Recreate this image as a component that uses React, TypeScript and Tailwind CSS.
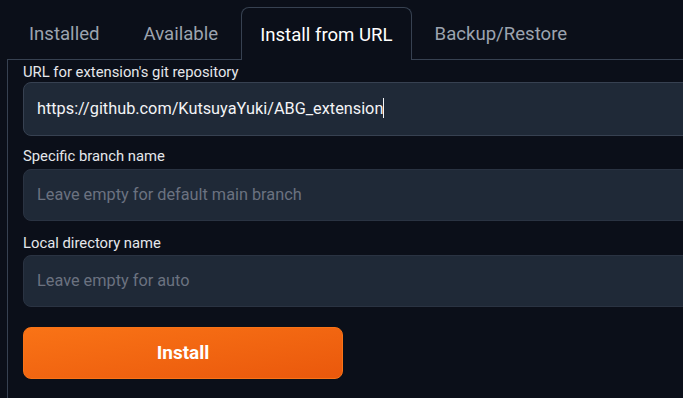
import React from "react";

const tabs = ["Installed", "Available", "Install from URL", "Backup/Restore"];

const Field = ({
  label,
  value,
  placeholder,
  focused,
  className,
}: {
  label: string;
  value?: string;
  placeholder?: string;
  focused?: boolean;
  className?: string;
}) => (
  <div className={"flex flex-col " + (className ?? "")}>
    <div className="h-5 leading-5 text-[14.8px] text-[#e5e7eb]">{label}</div>
    <div
      className={
        "flex items-center w-[720px] rounded-lg border bg-[#1f2937] px-[13px] text-[16.3px] " +
        (focused ? "h-[54px] border-[#374151]" : "h-[52px] border-[#2a3342]")
      }
    >
      {value ? (
        <span className="text-[#f3f4f6]">
          {value}
          <span className="inline-block w-px h-[20px] bg-[#f3f4f6] align-middle -mt-[2px]" />
        </span>
      ) : (
        <span className="text-[#6b7280]">{placeholder}</span>
      )}
    </div>
  </div>
);

export default function App() {
  return (
    <div
      className="w-[683px] h-[398px] overflow-hidden bg-[#0b0f19] pt-[7px] pl-[7px]"
      style={{ fontFamily: "Roboto, 'Noto Sans', sans-serif" }}
    >
      {/* Tabs */}
      <div className="flex pl-px gap-[2px] relative z-10">
        {tabs.map((t) => {
          const active = t === "Install from URL";
          return (
            <div
              key={t}
              className={
                "h-[53px] pt-[3px] flex items-center text-[18.6px] " +
                (active
                  ? "px-[18px] border border-b-0 border-[#374151] rounded-t-lg bg-[#0b0f19] text-white"
                  : "px-5 text-[#9ca3af] border border-transparent")
              }
            >
              {t}
            </div>
          );
        })}
      </div>
      {/* Panel */}
      <div className="-mt-px border-l border-t border-[#374151] w-[760px] h-[400px] pl-[15px] pt-[2px]">
        <Field
          label="URL for extension's git repository"
          value="https://github.com/KutsuyaYuki/ABG_extension"
          focused
        />
        <Field
          label="Specific branch name"
          placeholder="Leave empty for default main branch"
          className="mt-[10px] [&>div:first-child]:mb-[3px]"
        />
        <Field
          label="Local directory name"
          placeholder="Leave empty for auto"
          className="mt-[12px] [&>div:first-child]:mb-[2px]"
        />
        <button className="mt-5 w-[320px] h-[52px] rounded-lg border border-[#f97316] bg-gradient-to-br from-[#f97316] to-[#ea580c] text-white font-bold text-[19px]">
          Install
        </button>
      </div>
    </div>
  );
}
